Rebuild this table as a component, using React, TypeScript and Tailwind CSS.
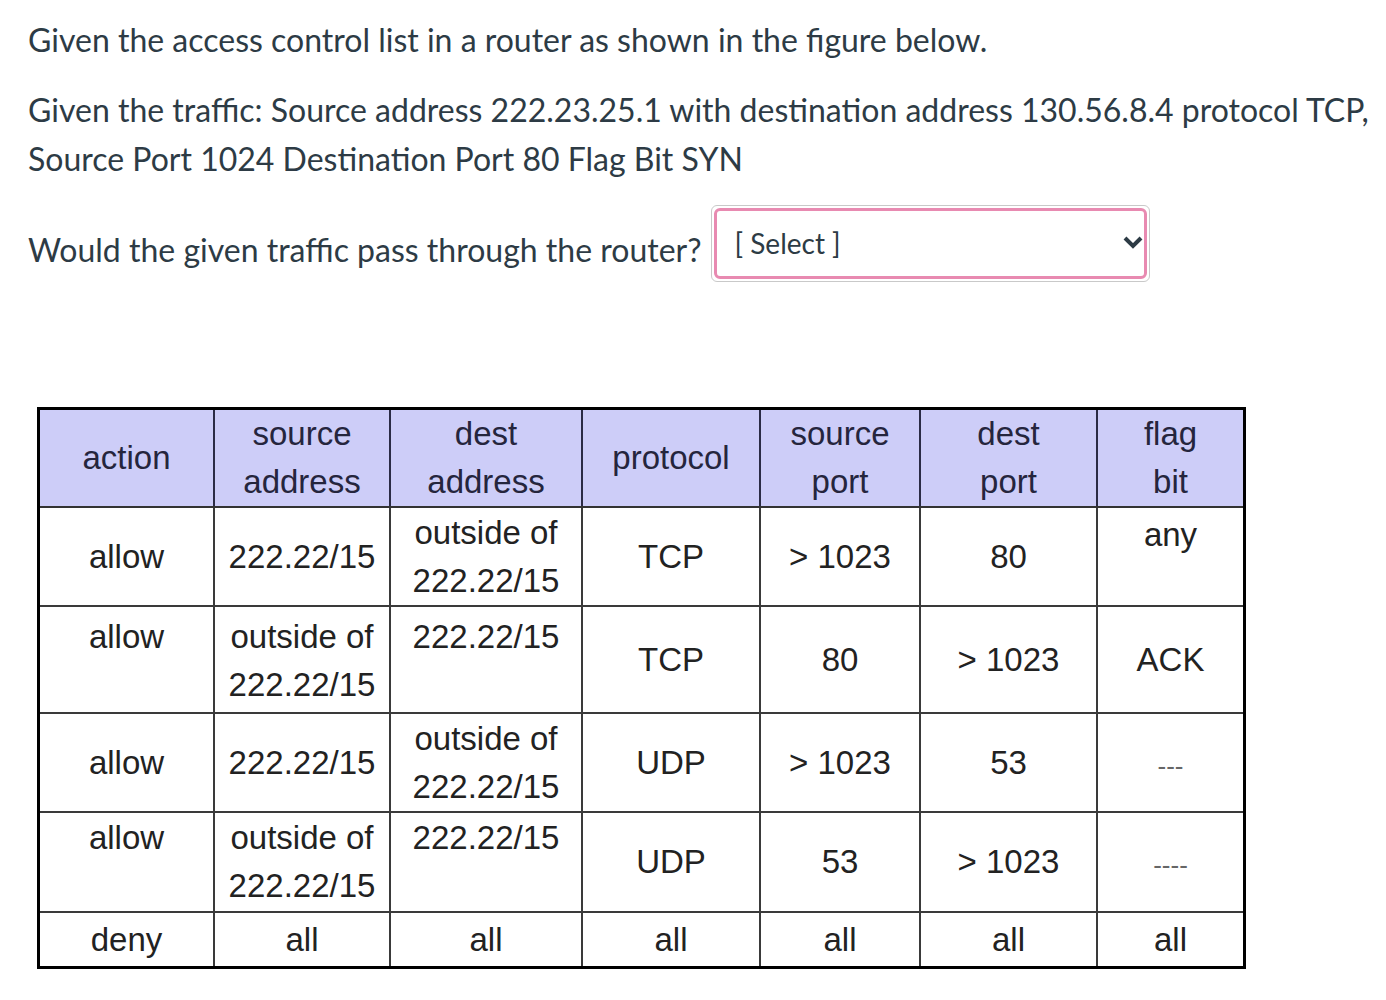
const cols = ["w-[175px]", "w-[176px]", "w-[192px]", "w-[178px]", "w-[160px]", "w-[177px]", "w-[145px]"];

type Cell = { lines: string[]; top?: string; dash?: boolean };

const header: string[][] = [
  ["action"],
  ["source", "address"],
  ["dest", "address"],
  ["protocol"],
  ["source", "port"],
  ["dest", "port"],
  ["flag", "bit"],
];

const rows: { h: string; cells: Cell[] }[] = [
  {
    h: "h-[99px]",
    cells: [
      { lines: ["allow"] },
      { lines: ["222.22/15"] },
      { lines: ["outside of", "222.22/15"] },
      { lines: ["TCP"] },
      { lines: ["> 1023"] },
      { lines: ["80"] },
      { lines: ["any"], top: "pt-[3px]" },
    ],
  },
  {
    h: "h-[107px]",
    cells: [
      { lines: ["allow"], top: "pt-[6px]" },
      { lines: ["outside of", "222.22/15"], top: "pt-[6px]" },
      { lines: ["222.22/15"], top: "pt-[6px]" },
      { lines: ["TCP"] },
      { lines: ["80"] },
      { lines: ["> 1023"] },
      { lines: ["ACK"] },
    ],
  },
  {
    h: "h-[99px]",
    cells: [
      { lines: ["allow"] },
      { lines: ["222.22/15"] },
      { lines: ["outside of", "222.22/15"] },
      { lines: ["UDP"] },
      { lines: ["> 1023"] },
      { lines: ["53"] },
      { lines: ["---"], dash: true },
    ],
  },
  {
    h: "h-[100px]",
    cells: [
      { lines: ["allow"], top: "pt-[1px]" },
      { lines: ["outside of", "222.22/15"] },
      { lines: ["222.22/15"], top: "pt-[1px]" },
      { lines: ["UDP"] },
      { lines: ["53"] },
      { lines: ["> 1023"] },
      { lines: ["----"], dash: true },
    ],
  },
  {
    h: "h-[53px]",
    cells: [
      { lines: ["deny"] },
      { lines: ["all"] },
      { lines: ["all"] },
      { lines: ["all"] },
      { lines: ["all"] },
      { lines: ["all"] },
      { lines: ["all"] },
    ],
  },
];

const App = () => {
  return (
    <div className="min-h-[1000px] bg-white text-[#2d3b45] font-['Lato',sans-serif] text-[32px] leading-[49px] pl-[28px] pt-[15px]">
      <p>Given the access control list in a router as shown in the figure below.</p>
      <p className="mt-[21px]">
        Given the traffic: Source address 222.23.25.1 with destination address 130.56.8.4 protocol TCP,
        <br />
        Source Port 1024 Destination Port 80 Flag Bit SYN
      </p>

      <div className="mt-[22px] flex items-start">
        <span className="mt-[20px]">Would the given traffic pass through the router?</span>
        <div className="ml-[9px] rounded-[6px] border-[1.5px] border-[#c9c9c9] p-[2px]">
          <div className="flex h-[71px] w-[433px] items-center justify-between rounded-[6px] border-[3px] border-[#e88ab1] pl-[18px] pr-[1px] text-[28px]">
            <span>[ Select ]</span>
            <svg width="20" height="14" viewBox="0 0 20 14" className="mt-[-3px]">
              <polyline points="2,3 10,11 18,3" fill="none" stroke="#2d3b45" strokeWidth="4" />
            </svg>
          </div>
        </div>
      </div>

      <div className="mt-[125px] ml-[9px] inline-block border-[3px] border-black font-['Liberation_Sans',Arial,sans-serif] text-[33px] leading-[48px]">
        <div className="flex h-[98px] bg-[#cdcdf8] text-[#25253d] border-b-2 border-[#333]">
          {header.map((lines, i) => (
            <div
              key={i}
              className={`${cols[i]} flex flex-col items-center justify-center ${i < 6 ? "border-r-2 border-[#2b2b45]" : ""}`}
            >
              {lines.map((l) => (
                <span key={l}>{l}</span>
              ))}
            </div>
          ))}
        </div>
        {rows.map((r, ri) => (
          <div
            key={ri}
            className={`flex ${r.h} text-[#222] ${ri < rows.length - 1 ? "border-b-2 border-[#3a3a3a]" : ""}`}
          >
            {r.cells.map((c, i) => (
              <div
                key={i}
                className={`${cols[i]} flex flex-col items-center ${c.top ? `justify-start ${c.top}` : "justify-center"} ${i < 6 ? "border-r-2 border-[#3a3a3a]" : ""}`}
              >
                {c.lines.map((l) => (
                  <span key={l} className={c.dash ? "text-[26px] text-[#666] pt-[6px]" : ""}>
                    {l}
                  </span>
                ))}
              </div>
            ))}
          </div>
        ))}
      </div>
    </div>
  );
};

export default App;
